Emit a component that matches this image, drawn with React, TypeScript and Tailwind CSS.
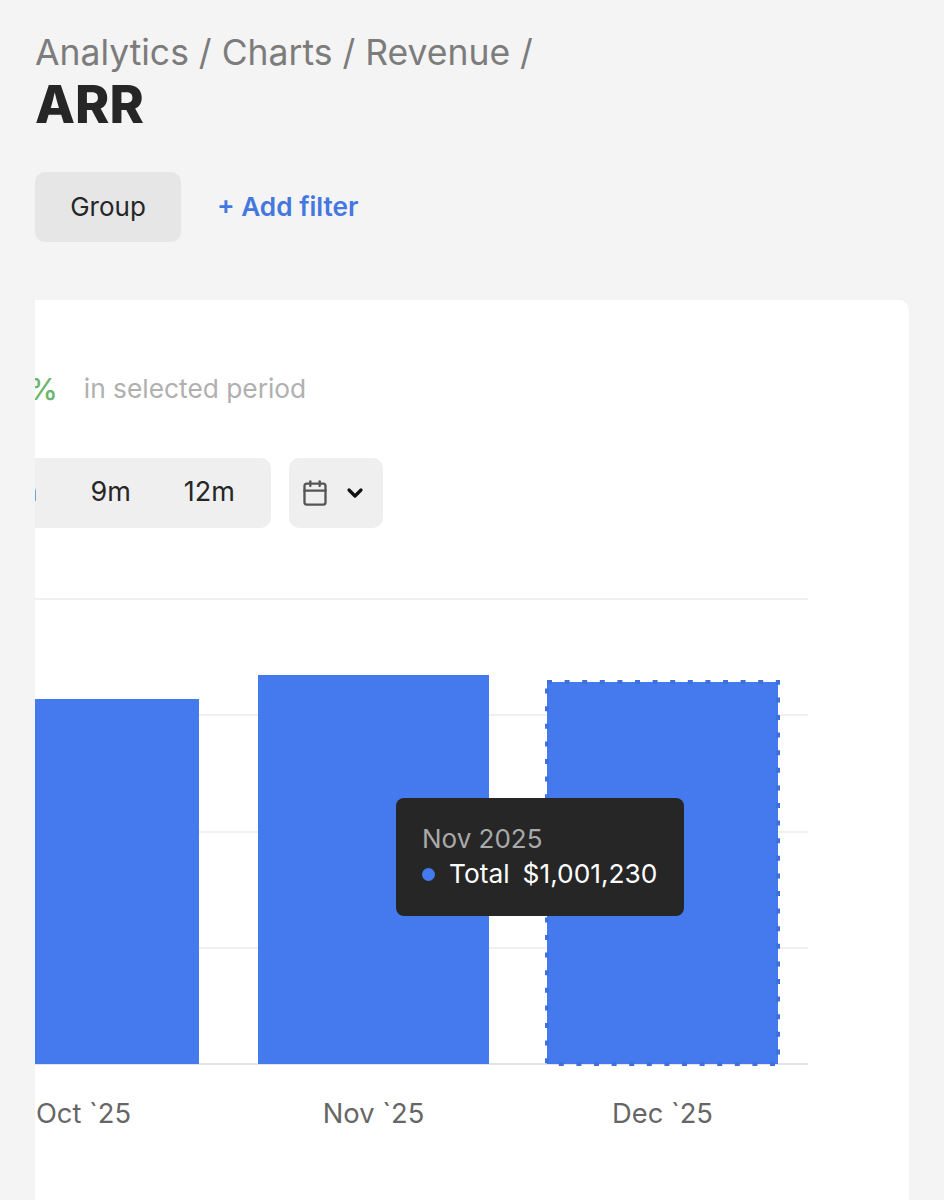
import { Calendar, ChevronDown } from "lucide-react";

const bars = [
  { label: "Oct `25", height: 365, spacing: "mr-px" },
  { label: "Nov `25", height: 389, spacing: "" },
  { label: "Dec `25", height: 382, spacing: "", selected: true },
];

function DashedOutline() {
  return (
    <svg className="absolute left-0 top-0 overflow-visible" width="231" height="382" fill="none">
      <rect x="0" y="0" width="231" height="382" stroke="#3f70dc" strokeWidth="4" strokeDasharray="5 12.6" />
    </svg>
  );
}

export default function App() {
  return (
    <div className="h-[1200px] overflow-hidden bg-[#f4f4f4] pl-[35px] pr-[35px] pt-[33px] font-['Inter',sans-serif]">
      <div className="text-[35.5px] leading-[40px] text-[#7c7c7c]">Analytics / Charts / Revenue /</div>
      <h1 className="mt-[4px] text-[52px] font-extrabold leading-[56px] text-[#262626]">ARR</h1>

      <div className="mt-[39px] flex items-center gap-[36px]">
        <button className="h-[70px] w-[146px] rounded-[10px] bg-[#e6e6e6] pb-[1px] text-[26px] text-[#262626]">Group</button>
        <button className="text-[26.2px] font-semibold text-[#4477e0]">+ Add filter</button>
      </div>

      <div className="mt-[58px] h-[900px] overflow-hidden rounded-tr-[10px] bg-white">
        <div className="mt-[71px] flex h-[36px] items-center gap-[26px] text-[26.3px]">
          <span className="-ml-[7px] text-[30px] font-medium text-[#6cb56c]">%</span>
          <span className="text-[#b0b0b0]">in selected period</span>
        </div>

        <div className="mt-[51px] flex gap-[18px]">
          <div className="-ml-[60px] flex h-[70px] items-center gap-[53px] rounded-[10px] bg-[#efefef] pb-[1px] pl-[22px] pr-[36px] text-[27px] text-[#262626]">
            <span>6m</span>
            <span>9m</span>
            <span>12m</span>
          </div>
          <button className="flex h-[70px] w-[94px] items-center gap-[14px] rounded-[10px] bg-[#efefef] pl-[12px]">
            <Calendar size={28} strokeWidth={2} className="text-[#555555]" />
            <ChevronDown size={24} strokeWidth={3.2} className="text-[#111111]" />
          </button>
        </div>

        <div className="relative mt-[70px] h-[467px] w-[773px]">
          <div className="absolute inset-0 flex flex-col justify-between">
            <div className="h-[2px] bg-[#f0f0f0]" />
            <div className="h-[2px] bg-[#f0f0f0]" />
            <div className="h-[2px] bg-[#f0f0f0]" />
            <div className="h-[2px] bg-[#f0f0f0]" />
            <div className="h-[2px] bg-[#e4e4e4]" />
          </div>
          <div className="relative -ml-[67px] flex h-[466px] items-end gap-[58px]">
            {bars.map((bar) => (
              <div
                key={bar.label}
                className={`relative w-[231px] bg-[#4579ee] ${bar.spacing}`}
                style={{ height: bar.height }}
              >
                {bar.selected && <DashedOutline />}
              </div>
            ))}
          </div>
          <div className="absolute left-[361px] top-[200px] h-[118px] w-[288px] rounded-[8px] bg-[#262626] pl-[26px] pt-[25px]">
            <div className="text-[26px] leading-[32px] text-[#a9a9a9]">Nov 2025</div>
            <div className="mt-[3px] flex items-center text-[26.3px] leading-[32px] text-white">
              <span className="mr-[14px] h-[13px] w-[13px] rounded-full bg-[#4579ee]" />
              <span className="mr-[13px]">Total</span>
              <span>$1,001,230</span>
            </div>
          </div>
        </div>

        <div className="-ml-[67px] mt-[31px] flex gap-[58px] text-[27.3px] leading-[36px] text-[#666666]">
          {bars.map((bar) => (
            <div key={bar.label} className={`w-[231px] text-center ${bar.spacing}`}>
              {bar.label}
            </div>
          ))}
        </div>
      </div>
    </div>
  );
}
